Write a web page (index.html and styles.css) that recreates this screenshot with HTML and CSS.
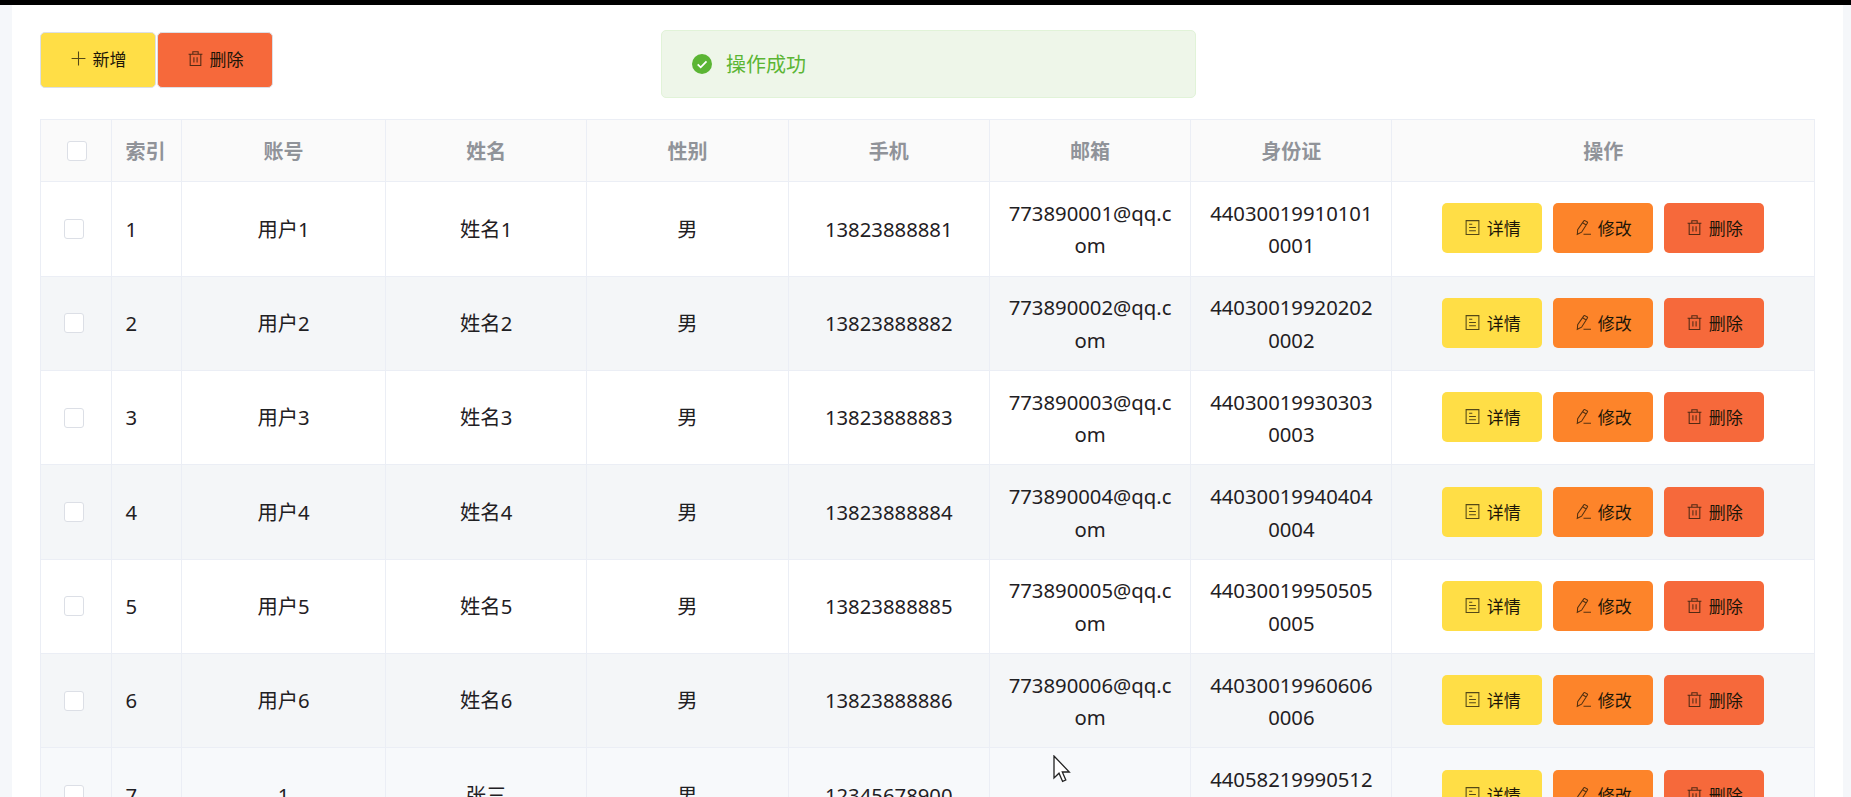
FILE: index.html
```
<!DOCTYPE html>
<html lang="zh-CN">
<head>
    <meta charset="UTF-8">
    <meta name="viewport" content="width=device-width, initial-scale=1.0">
    <title>用户管理</title>
    <link rel="stylesheet" href="styles.css">
</head>
<body>
    <!-- icons -->
    <svg class="sprite" xmlns="http://www.w3.org/2000/svg">
        <symbol id="plus" viewBox="0 0 16 16"><path d="M8 1.5v13M1.5 8h13"/></symbol>
        <symbol id="delete" viewBox="0 0 16 16"><path d="M1.5 4h13M5.5 4V1.6h5V4M3 4v10.5h10V4M6.5 6.8v5M9.5 6.8v5"/></symbol>
        <symbol id="edit" viewBox="0 0 16 16"><path d="M8.3 1.8q.4-.6 1-.3l2.2 1.3q.6.4.2 1L6.2 12.4l-4 2 .3-4.3zM7.2 3.6l3.3 2M1.6 14.6l2.6-1.2M8 14.3h7"/></symbol>
        <symbol id="tickets" viewBox="0 0 16 16"><path d="M2 1.5h12v13H2zM4.8 5h3M4.8 8h6.4M4.8 11h6.4"/></symbol>
    </svg>

    <div class="topbar"></div>
    <div class="container">
        <div class="toolbar">
            <button class="btn btn-add"><svg><use href="#plus"/></svg>新增</button>
            <button class="btn btn-delete"><svg><use href="#delete"/></svg>删除</button>
        </div>

        <table>
            <colgroup>
                <col class="col-check">
                <col class="col-index">
                <col class="col-account">
                <col class="col-text">
                <col class="col-text">
                <col class="col-text">
                <col class="col-text">
                <col class="col-text">
                <col>
            </colgroup>
            <thead>
                <tr>
                    <th><span class="checkbox"></span></th>
                    <th class="index">索引</th>
                    <th>账号</th>
                    <th>姓名</th>
                    <th>性别</th>
                    <th>手机</th>
                    <th>邮箱</th>
                    <th>身份证</th>
                    <th>操作</th>
                </tr>
            </thead>
            <tbody>
                <tr>
                    <td class="check"><span class="checkbox"></span></td>
                    <td class="index">1</td>
                    <td>用户1</td>
                    <td>姓名1</td>
                    <td>男</td>
                    <td>13823888881</td>
                    <td>773890001@qq.com</td>
                    <td>440300199101010001</td>
                    <td>
                        <div class="actions">
                            <button class="btn btn-detail"><svg><use href="#tickets"/></svg>详情</button>
                            <button class="btn btn-edit"><svg><use href="#edit"/></svg>修改</button>
                            <button class="btn btn-delete"><svg><use href="#delete"/></svg>删除</button>
                        </div>
                    </td>
                </tr>
                <tr>
                    <td class="check"><span class="checkbox"></span></td>
                    <td class="index">2</td>
                    <td>用户2</td>
                    <td>姓名2</td>
                    <td>男</td>
                    <td>13823888882</td>
                    <td>773890002@qq.com</td>
                    <td>440300199202020002</td>
                    <td>
                        <div class="actions">
                            <button class="btn btn-detail"><svg><use href="#tickets"/></svg>详情</button>
                            <button class="btn btn-edit"><svg><use href="#edit"/></svg>修改</button>
                            <button class="btn btn-delete"><svg><use href="#delete"/></svg>删除</button>
                        </div>
                    </td>
                </tr>
                <tr>
                    <td class="check"><span class="checkbox"></span></td>
                    <td class="index">3</td>
                    <td>用户3</td>
                    <td>姓名3</td>
                    <td>男</td>
                    <td>13823888883</td>
                    <td>773890003@qq.com</td>
                    <td>440300199303030003</td>
                    <td>
                        <div class="actions">
                            <button class="btn btn-detail"><svg><use href="#tickets"/></svg>详情</button>
                            <button class="btn btn-edit"><svg><use href="#edit"/></svg>修改</button>
                            <button class="btn btn-delete"><svg><use href="#delete"/></svg>删除</button>
                        </div>
                    </td>
                </tr>
                <tr>
                    <td class="check"><span class="checkbox"></span></td>
                    <td class="index">4</td>
                    <td>用户4</td>
                    <td>姓名4</td>
                    <td>男</td>
                    <td>13823888884</td>
                    <td>773890004@qq.com</td>
                    <td>440300199404040004</td>
                    <td>
                        <div class="actions">
                            <button class="btn btn-detail"><svg><use href="#tickets"/></svg>详情</button>
                            <button class="btn btn-edit"><svg><use href="#edit"/></svg>修改</button>
                            <button class="btn btn-delete"><svg><use href="#delete"/></svg>删除</button>
                        </div>
                    </td>
                </tr>
                <tr>
                    <td class="check"><span class="checkbox"></span></td>
                    <td class="index">5</td>
                    <td>用户5</td>
                    <td>姓名5</td>
                    <td>男</td>
                    <td>13823888885</td>
                    <td>773890005@qq.com</td>
                    <td>440300199505050005</td>
                    <td>
                        <div class="actions">
                            <button class="btn btn-detail"><svg><use href="#tickets"/></svg>详情</button>
                            <button class="btn btn-edit"><svg><use href="#edit"/></svg>修改</button>
                            <button class="btn btn-delete"><svg><use href="#delete"/></svg>删除</button>
                        </div>
                    </td>
                </tr>
                <tr>
                    <td class="check"><span class="checkbox"></span></td>
                    <td class="index">6</td>
                    <td>用户6</td>
                    <td>姓名6</td>
                    <td>男</td>
                    <td>13823888886</td>
                    <td>773890006@qq.com</td>
                    <td>440300199606060006</td>
                    <td>
                        <div class="actions">
                            <button class="btn btn-detail"><svg><use href="#tickets"/></svg>详情</button>
                            <button class="btn btn-edit"><svg><use href="#edit"/></svg>修改</button>
                            <button class="btn btn-delete"><svg><use href="#delete"/></svg>删除</button>
                        </div>
                    </td>
                </tr>
                <tr class="hover">
                    <td class="check"><span class="checkbox"></span></td>
                    <td class="index">7</td>
                    <td>1</td>
                    <td>张三</td>
                    <td>男</td>
                    <td>12345678900</td>
                    <td></td>
                    <td>440582199905120007</td>
                    <td>
                        <div class="actions">
                            <button class="btn btn-detail"><svg><use href="#tickets"/></svg>详情</button>
                            <button class="btn btn-edit"><svg><use href="#edit"/></svg>修改</button>
                            <button class="btn btn-delete"><svg><use href="#delete"/></svg>删除</button>
                        </div>
                    </td>
                </tr>
            </tbody>
        </table>
    </div>

    <div class="message">
        <svg class="message-icon" viewBox="0 0 20 20">
            <circle cx="10" cy="10" r="10"/>
            <path d="M5.7 10.3l3 3 5.8-6"/>
        </svg>
        <span>操作成功</span>
    </div>

    <svg class="cursor" viewBox="0 0 18 28">
        <path d="M1 1v22l5-4.8 3.6 8.2 3.2-1.4-3.5-8h7z"/>
    </svg>
</body>
</html>
```
FILE: styles.css
```
:root {
    --yellow: #ffde46;
    --orange: #fd842a;
    --red: #f6693b;
    --background: #f5f7fa;
    --border-color: #ebeef5;
    --text-primary: #1f2023;
    --text-header: #909399;
    --success-color: #5bb534;
}

* {
    box-sizing: border-box;
}

body {
    font-family: "Noto Sans", "Noto Sans CJK SC", sans-serif;
    font-size: 20px;
    margin: 0;
    height: 797px;
    overflow: hidden;
    background: var(--background);
    color: var(--text-primary);
}

.sprite {
    display: none;
}

.topbar {
    height: 5px;
    background: #000;
}

.container {
    background: #fff;
    margin: 0 8px 0 12px;
    padding: 27px 28px 0;
}

.toolbar {
    display: flex;
    gap: 1px;
    margin-bottom: 31px;
}

.btn {
    display: flex;
    align-items: center;
    justify-content: center;
    gap: 6px;
    width: 100px;
    height: 50px;
    padding: 0 0 1px;
    border: none;
    border-radius: 5px;
    font-family: "Noto Sans CJK SC", sans-serif;
    font-size: 17px;
    color: #1c1608;
    cursor: pointer;
}

.btn svg {
    width: 17px;
    height: 17px;
    fill: none;
    stroke: #1c1608;
    stroke-width: 1;
    opacity: 0.75;
}

.toolbar .btn {
    width: 116px;
    height: 56px;
    padding-bottom: 3px;
    border: 1px solid #dcdfe6;
}

.btn-add,
.btn-detail {
    background: var(--yellow);
}

.btn-edit {
    background: var(--orange);
}

.btn-delete {
    background: var(--red);
}

table {
    width: 1775px;
    table-layout: fixed;
    border-collapse: separate;
    border-spacing: 0;
    border-top: 1px solid var(--border-color);
    border-left: 1px solid var(--border-color);
}

.col-check {
    width: 70.5px;
}

.col-index {
    width: 70.5px;
}

.col-account {
    width: 204px;
}

.col-text {
    width: 201.3px;
}

th,
td {
    padding: 0 14px;
    border-right: 1px solid var(--border-color);
    border-bottom: 1px solid var(--border-color);
    text-align: center;
    vertical-align: middle;
    line-height: 32.5px;
    word-break: break-all;
}

th {
    height: 62.3px;
    padding-top: 3px;
    background: #fafafa;
    color: var(--text-header);
    font-weight: 700;
}

td {
    height: 94.35px;
    font-size: 20.3px;
}

/* long values break after 14 characters */
td:nth-child(7),
td:nth-child(8) {
    padding: 1px 16px 0;
}

tbody tr:nth-child(even) {
    background: #f4f6f8;
}

tbody tr.hover {
    background: #f7f9fb;
}

.index {
    text-align: left;
}

.check {
    padding-left: 23px;
    text-align: left;
}

.checkbox {
    display: block;
    width: 20px;
    height: 20px;
    margin: 0 auto;
    border: 1px solid #dcdfe6;
    border-radius: 3px;
    background: #fff;
}

th .checkbox {
    margin-bottom: 3px;
    position: relative;
    left: 1px;
}

.check .checkbox {
    margin: 0;
}

.actions {
    display: flex;
    justify-content: center;
    gap: 11px;
    padding-bottom: 1px;
}

.message {
    position: absolute;
    top: 30px;
    left: 661px;
    display: flex;
    align-items: center;
    gap: 14px;
    width: 535px;
    height: 68px;
    padding: 0 30px 1px;
    border: 1px solid #e1f3d8;
    border-radius: 5px;
    background: #eef6e9;
    color: var(--success-color);
}

.message span {
    padding-bottom: 1px;
}

.message-icon {
    width: 20px;
    height: 20px;
    fill: var(--success-color);
}

.message-icon path {
    fill: none;
    stroke: #fff;
    stroke-width: 1.8;
}

.cursor {
    position: absolute;
    top: 755px;
    left: 1053px;
    width: 18px;
    height: 28px;
    fill: #fff;
    stroke: #222;
    stroke-width: 1.3;
}
```
